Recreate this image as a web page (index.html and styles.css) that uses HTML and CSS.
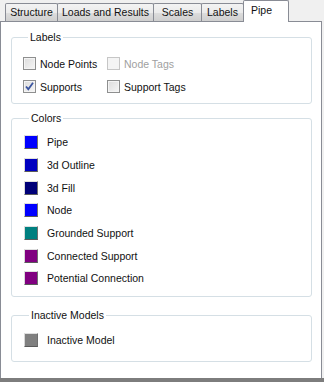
FILE: index.html
```html
<!DOCTYPE html>
<html lang="en">
<head>
    <meta charset="UTF-8">
    <title>Pipe Options</title>
    <link rel="stylesheet" href="styles.css">
</head>
<body>
    <div class="window">
        <div class="tabs">
            <div class="tab tab-structure">Structure</div>
            <div class="tab tab-loads">Loads and Results</div>
            <div class="tab tab-scales">Scales</div>
            <div class="tab tab-labels">Labels</div>
            <div class="tab tab-pipe active">Pipe</div>
        </div>

        <div class="page">
            <fieldset class="group group-labels">
                <legend>Labels</legend>
                <div class="check-grid">
                    <label class="check">
                        <span class="box"></span>
                        <span>Node Points</span>
                    </label>
                    <label class="check disabled">
                        <span class="box"></span>
                        <span>Node Tags</span>
                    </label>
                    <label class="check">
                        <span class="box checked">
                            <svg width="11" height="11" viewBox="0 0 11 11">
                                <path d="M2 5.5 L4.3 8.2 L9 1.8" fill="none" stroke="#3b55a0" stroke-width="1.8"/>
                            </svg>
                        </span>
                        <span>Supports</span>
                    </label>
                    <label class="check">
                        <span class="box"></span>
                        <span>Support Tags</span>
                    </label>
                </div>
            </fieldset>

            <fieldset class="group group-colors">
                <legend>Colors</legend>
                <div class="color-row"><span class="swatch c-pipe"></span>Pipe</div>
                <div class="color-row"><span class="swatch c-outline"></span>3d Outline</div>
                <div class="color-row"><span class="swatch c-fill"></span>3d Fill</div>
                <div class="color-row"><span class="swatch c-node"></span>Node</div>
                <div class="color-row"><span class="swatch c-grounded"></span>Grounded Support</div>
                <div class="color-row"><span class="swatch c-connected"></span>Connected Support</div>
                <div class="color-row"><span class="swatch c-potential"></span>Potential Connection</div>
            </fieldset>

            <fieldset class="group group-inactive">
                <legend>Inactive Models</legend>
                <div class="color-row"><span class="swatch c-inactive"></span>Inactive Model</div>
            </fieldset>
        </div>
    </div>
</body>
</html>
```

FILE: styles.css
```css
/* Reset */
* {
    margin: 0;
    padding: 0;
    box-sizing: border-box;
}

body {
    font-family: 'Liberation Sans', Arial, sans-serif;
    font-size: 10.5px;
    color: #111;
    background-color: #f0f0f0;
    width: 324px;
    height: 382px;
    overflow: hidden;
}

.window {
    height: 382px;
    display: flex;
    flex-direction: column;
    border-bottom: 4px solid #7d7d7d;
}

/* Tab strip */
.tabs {
    display: flex;
    align-items: flex-end;
    height: 21px;
    padding-left: 5px;
}

.tab {
    height: 18px;
    line-height: 16px;
    text-align: center;
    border: 1px solid #898c95;
    border-bottom: none;
    border-radius: 2px 2px 0 0;
    background: linear-gradient(#f3f3f3, #ebebeb 50%, #dddddd 51%, #cfcfcf);
    margin-right: -1px;
    position: relative;
}

.tab-structure { width: 53px; }
.tab-loads { width: 97px; }
.tab-scales { width: 49px; }
.tab-labels { width: 43px; }

.tab.active {
    width: 46px;
    height: 22px;
    line-height: 19px;
    background: #fff;
    margin-bottom: -1px;
    z-index: 1;
    text-align: left;
    padding-left: 7px;
}

/* Tab page */
.page {
    flex: 1;
    background-color: #fff;
    border: 1px solid #898c95;
    border-bottom: none;
    margin-right: 2px;
    padding: 9px 0 0 10px;
}

.group {
    width: 301px;
    border: 1px solid #d5dfe5;
    border-radius: 3px;
}

.group legend {
    margin-left: 5px;
    padding: 0 2px;
    line-height: 13px;
}

/* Labels */
.group-labels {
    padding: 8px 0 5px 11px;
}

.check-grid {
    display: grid;
    grid-template-columns: 84px auto;
    grid-auto-rows: 23px;
}

.check {
    display: flex;
    align-items: center;
    gap: 4px;
}

.check.disabled {
    color: #a0a0a0;
}

.box {
    width: 13px;
    height: 13px;
    border: 1px solid #8e8f8f;
    background: linear-gradient(135deg, #dcdcdc, #f6f6f6);
    box-shadow: inset 0 0 0 1px #f4f4f4;
    display: flex;
    align-items: center;
    justify-content: center;
}

.check.disabled .box {
    border-color: #c6c6c6;
    background: #f4f4f4;
}

/* Colors */
.group-colors {
    margin-top: 8px;
    padding: 6px 0 6px 12px;
}

.group-inactive {
    margin-top: 12px;
    padding: 7px 0 9px 12px;
}

.color-row {
    display: flex;
    align-items: center;
    height: 22.7px;
}

.swatch {
    width: 14px;
    height: 14px;
    margin-right: 9px;
    border: 1px solid;
    border-color: #e0e0e0 #707070 #5a5a5a #d8d8d8;
}

.c-pipe { background-color: #0000ff; }
.c-outline { background-color: #0000c0; }
.c-fill { background-color: #000078; }
.c-node { background-color: #0000ff; }
.c-grounded { background-color: #008080; }
.c-connected { background-color: #800080; }
.c-potential { background-color: #800080; }
.c-inactive { background-color: #808080; }
```
